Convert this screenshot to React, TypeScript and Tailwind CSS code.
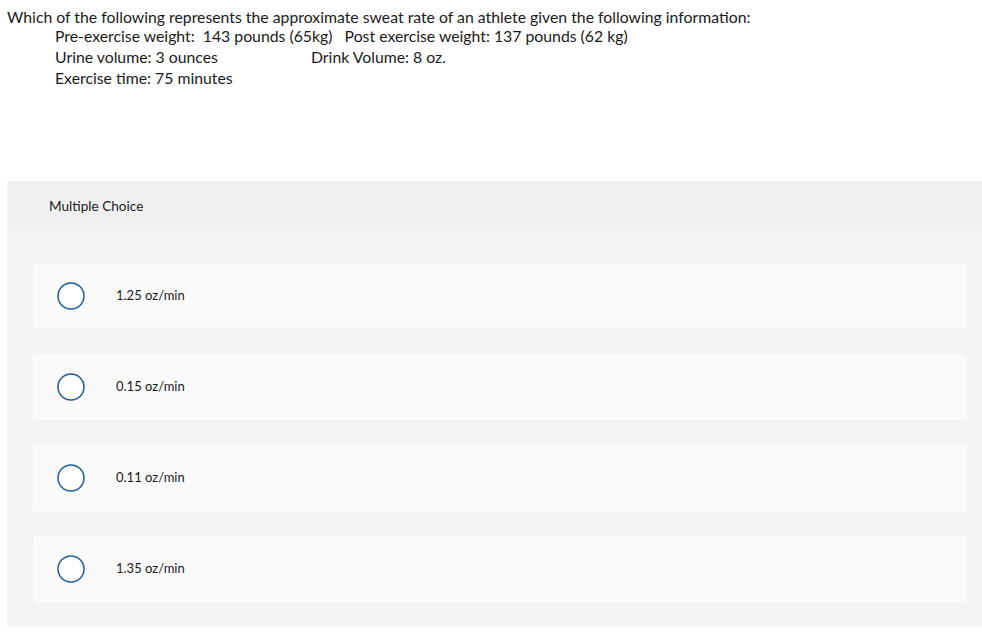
const options = ['1.25 oz/min', '0.15 oz/min', '0.11 oz/min', '1.35 oz/min'];

function Radio() {
  return (
    <svg width="28" height="28" viewBox="0 0 28 28" className="shrink-0">
      <circle cx="14" cy="14" r="13" fill="white" stroke="#1f5e98" strokeWidth="1.5" />
    </svg>
  );
}

export default function App() {
  return (
    <div className="min-h-[640px] bg-white text-[#1a1a1a] font-['Lato','Liberation_Sans',sans-serif]">
      <div className="pt-[8px] text-[15.8px] leading-[21px]">
        <p className="pl-[7px] leading-[17px]">
          Which of the following represents the approximate sweat rate of an athlete given the following information:
        </p>
        <div className="pl-[55px]">
          <p>Pre-exercise weight:&nbsp; 143 pounds (65kg)&nbsp;&nbsp; Post exercise weight: 137 pounds (62 kg)</p>
          <div className="flex">
            <p className="w-[256px]">Urine volume: 3 ounces</p>
            <p>Drink Volume: 8 oz.</p>
          </div>
          <p>Exercise time: 75 minutes</p>
        </div>
      </div>

      <div className="ml-[7px] mt-[93px] bg-[#f4f4f4]">
        <div className="flex h-[50px] items-center bg-[#f0f0f0] pl-[42px] text-[13.6px]">Multiple Choice</div>
        <div className="flex flex-col gap-[25px] pl-[26px] pr-[16px] pt-[32px] pb-[24px]">
          {options.map((o) => (
            <div key={o} className="flex h-[66px] items-center rounded-[3px] bg-[#fafafa] pl-[24px]">
              <Radio />
              <span className="ml-[31px] text-[13px]">{o}</span>
            </div>
          ))}
        </div>
      </div>
    </div>
  );
}
